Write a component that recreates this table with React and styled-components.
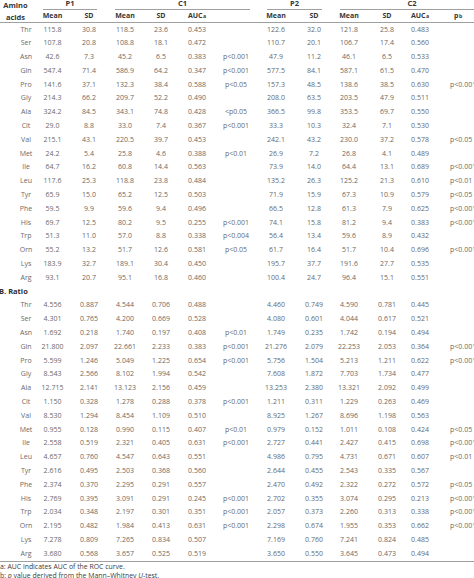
import React from 'react';
import styled, { createGlobalStyle } from 'styled-components';

const GlobalStyle = createGlobalStyle`
  html, body {
    margin: 0;
    padding: 0;
    background: #fff;
    overflow: hidden;
  }
  body {
    font-family: "Open Sans", "Liberation Sans", sans-serif;
  }
`;

// column widths: name | P1 mean sd | C1 mean sd auc p | P2 mean sd | C2 mean sd auc p
const COLS = '33px 39px 34px 38px 34px 38px 40px 40px 36px 34px 42px 24px 52px';

const conc = [
	['Thr', '115.8', '30.8', '118.5', '23.6', '0.453', '', '122.6', '32.0', '121.8', '25.8', '0.483', ''],
	['Ser', '107.8', '20.8', '108.8', '18.1', '0.472', '', '110.7', '20.1', '106.7', '17.4', '0.560', ''],
	['Asn', '42.6', '7.3', '45.2', '6.5', '0.383', 'p<0.001', '47.9', '11.2', '46.1', '6.5', '0.533', ''],
	['Gln', '547.4', '71.4', '586.9', '64.2', '0.347', 'p<0.001', '577.5', '84.1', '587.1', '61.5', '0.470', ''],
	['Pro', '141.6', '37.1', '132.3', '38.4', '0.588', 'p<0.05', '157.3', '48.5', '138.6', '38.5', '0.630', 'p<0.001'],
	['Gly', '214.3', '66.2', '209.7', '52.2', '0.490', '', '208.0', '63.5', '203.5', '47.9', '0.511', ''],
	['Ala', '324.2', '84.5', '343.1', '74.8', '0.428', '<p0.05', '366.5', '99.8', '353.5', '69.7', '0.550', ''],
	['Cit', '29.0', '8.8', '33.0', '7.4', '0.367', 'p<0.001', '33.3', '10.3', '32.4', '7.1', '0.530', ''],
	['Val', '215.1', '43.1', '220.5', '39.7', '0.453', '', '242.1', '43.2', '230.0', '37.2', '0.578', 'p<0.05'],
	['Met', '24.2', '5.4', '25.8', '4.6', '0.388', 'p<0.01', '26.9', '7.2', '26.8', '4.1', '0.489', ''],
	['Ile', '64.7', '16.2', '60.8', '14.4', '0.563', '', '73.9', '14.0', '64.4', '13.1', '0.689', 'p<0.001'],
	['Leu', '117.6', '25.3', '118.8', '23.8', '0.484', '', '135.2', '26.3', '125.2', '21.3', '0.610', 'p<0.01'],
	['Tyr', '65.9', '15.0', '65.2', '12.5', '0.503', '', '71.9', '15.9', '67.3', '10.9', '0.579', 'p<0.05'],
	['Phe', '59.5', '9.9', '59.6', '9.4', '0.496', '', '66.5', '12.8', '61.3', '7.9', '0.625', 'p<0.001'],
	['His', '69.7', '12.5', '80.2', '9.5', '0.255', 'p<0.001', '74.1', '15.8', '81.2', '9.4', '0.383', 'p<0.001'],
	['Trp', '51.3', '11.0', '57.0', '8.8', '0.338', 'p<0.004', '56.4', '13.4', '59.6', '8.9', '0.432', ''],
	['Orn', '55.2', '13.2', '51.7', '12.6', '0.581', 'p<0.05', '61.7', '16.4', '51.7', '10.4', '0.696', 'p<0.001'],
	['Lys', '183.9', '32.7', '189.1', '30.4', '0.450', '', '195.7', '37.7', '191.6', '27.7', '0.535', ''],
	['Arg', '93.1', '20.7', '95.1', '16.8', '0.460', '', '100.4', '24.7', '96.4', '15.1', '0.551', '']
];

const ratio = [
	['Thr', '4.556', '0.887', '4.544', '0.706', '0.488', '', '4.460', '0.749', '4.590', '0.781', '0.445', ''],
	['Ser', '4.301', '0.765', '4.200', '0.669', '0.528', '', '4.080', '0.601', '4.044', '0.617', '0.521', ''],
	['Asn', '1.692', '0.218', '1.740', '0.197', '0.408', 'p<0.01', '1.749', '0.235', '1.742', '0.194', '0.494', ''],
	['Gln', '21.800', '2.097', '22.661', '2.233', '0.383', 'p<0.001', '21.276', '2.079', '22.253', '2.053', '0.364', 'p<0.001'],
	['Pro', '5.599', '1.246', '5.049', '1.225', '0.654', 'p<0.001', '5.756', '1.504', '5.213', '1.211', '0.622', 'p<0.001'],
	['Gly', '8.543', '2.566', '8.102', '1.994', '0.542', '', '7.608', '1.872', '7.703', '1.734', '0.477', ''],
	['Ala', '12.715', '2.141', '13.123', '2.156', '0.459', '', '13.253', '2.380', '13.321', '2.092', '0.499', ''],
	['Cit', '1.150', '0.328', '1.278', '0.288', '0.378', 'p<0.001', '1.211', '0.311', '1.229', '0.263', '0.469', ''],
	['Val', '8.530', '1.294', '8.454', '1.109', '0.510', '', '8.925', '1.267', '8.696', '1.198', '0.563', ''],
	['Met', '0.955', '0.128', '0.990', '0.115', '0.407', 'p<0.01', '0.979', '0.152', '1.011', '0.108', '0.424', 'p<0.05'],
	['Ile', '2.558', '0.519', '2.321', '0.405', '0.631', 'p<0.001', '2.727', '0.441', '2.427', '0.415', '0.698', 'p<0.001'],
	['Leu', '4.657', '0.760', '4.547', '0.643', '0.551', '', '4.986', '0.795', '4.731', '0.671', '0.607', 'p<0.01'],
	['Tyr', '2.616', '0.495', '2.503', '0.368', '0.560', '', '2.644', '0.455', '2.543', '0.335', '0.567', ''],
	['Phe', '2.374', '0.370', '2.295', '0.291', '0.557', '', '2.470', '0.492', '2.322', '0.272', '0.572', 'p<0.05'],
	['His', '2.769', '0.395', '3.091', '0.291', '0.245', 'p<0.001', '2.702', '0.355', '3.074', '0.295', '0.213', 'p<0.001'],
	['Trp', '2.034', '0.348', '2.197', '0.301', '0.351', 'p<0.001', '2.057', '0.373', '2.260', '0.313', '0.338', 'p<0.001'],
	['Orn', '2.195', '0.482', '1.984', '0.413', '0.631', 'p<0.001', '2.298', '0.674', '1.955', '0.353', '0.662', 'p<0.001'],
	['Lys', '7.278', '0.809', '7.265', '0.834', '0.507', '', '7.169', '0.760', '7.241', '0.824', '0.485', ''],
	['Arg', '3.680', '0.568', '3.657', '0.525', '0.519', '', '3.650', '0.550', '3.645', '0.473', '0.494', '']
];

const Table = styled.div`
	width: 484px;
	margin-top: -3px;
	font-size: 7px;
	color: #6a6a6a;
`;

const Head = styled.div`
	display: grid;
	grid-template-columns: ${COLS};
	grid-template-rows: 13px 11.5px;
	border-bottom: 1px solid #a0a0a0;
	color: #363636;
	font-weight: 700;
`;

const CornerHead = styled.div`
	grid-row: 1 / span 2;
	grid-column: 1;
	display: flex;
	flex-direction: column;
	justify-content: flex-start;
	align-items: center;
	padding-top: 2px;
	padding-right: 2px;
	line-height: 12px;
	font-size: 7.5px;
`;

const GroupHead = styled.div`
	grid-row: 1;
	grid-column: ${(p) => p.$col};
	margin: 0 ${(p) => p.$r}px 0 ${(p) => p.$l}px;
	border-bottom: 1px solid #a0a0a0;
	display: flex;
	align-items: center;
	justify-content: center;
	font-size: 7.5px;
`;

const SubHead = styled.div`
	grid-row: 2;
	grid-column: ${(p) => p.$col};
	display: flex;
	align-items: center;
	justify-content: ${(p) => (p.$left ? 'flex-start' : 'center')};
	padding-left: ${(p) => p.$pad || 0}px;
`;

const Sup = styled.sup`
	font-size: 5.2px;
	vertical-align: 3px;
	line-height: 0;
	margin-left: 0.5px;
`;

const Row = styled.div`
	display: grid;
	grid-template-columns: ${COLS};
	height: 13.8px;
	align-items: center;
	line-height: 13.8px;
	white-space: nowrap;
`;

const NameCell = styled.div`
	text-align: center;
	padding-left: 19px;
`;

const Cell = styled.div`
	text-align: center;
`;

const PCell = styled.div`
	text-align: ${(p) => (p.$left ? 'left' : 'center')};
	padding-left: ${(p) => (p.$left ? 18 : 0)}px;
`;

const SectionRow = styled.div`
	height: 13.8px;
	line-height: 13.8px;
	font-weight: 700;
	font-size: 7.5px;
	color: #2e2e2e;
	margin-left: -1px;
`;

const Foot = styled.div`
	border-top: 1px solid #a0a0a0;
	width: 484px;
	color: #3a3a3a;
	font-size: 6.9px;
	line-height: 9.6px;
`;

const Note = styled.div`
	white-space: nowrap;
`;

function DataRow({ r }) {
	return (
		<Row>
			<NameCell>{r[0]}</NameCell>
			{r.slice(1, 6).map((v, i) => (
				<Cell key={i}>{v}</Cell>
			))}
			<PCell>{r[6]}</PCell>
			{r.slice(7, 12).map((v, i) => (
				<Cell key={i}>{v}</Cell>
			))}
			<PCell $left>{r[12]}</PCell>
		</Row>
	);
}

export default function App() {
	return (
		<>
			<GlobalStyle />
			<Table>
				<Head>
					<CornerHead>
						<span>Amino</span>
						<span>acids</span>
					</CornerHead>
					<GroupHead $col="2 / span 2" $l={10} $r={9}>P1</GroupHead>
					<GroupHead $col="4 / span 4" $l={9} $r={6}>C1</GroupHead>
					<GroupHead $col="8 / span 2" $l={11} $r={10}>P2</GroupHead>
					<GroupHead $col="10 / span 4" $l={8} $r={0}>C2</GroupHead>
					<SubHead $col={2}>Mean</SubHead>
					<SubHead $col={3}>SD</SubHead>
					<SubHead $col={4}>Mean</SubHead>
					<SubHead $col={5}>SD</SubHead>
					<SubHead $col={6}>AUC<Sup>a</Sup></SubHead>
					<SubHead $col={8}>Mean</SubHead>
					<SubHead $col={9}>SD</SubHead>
					<SubHead $col={10}>Mean</SubHead>
					<SubHead $col={11}>SD</SubHead>
					<SubHead $col={12}>AUC<Sup>a</Sup></SubHead>
					<SubHead $col={13} $left $pad={22}>p<Sup>b</Sup></SubHead>
				</Head>
				{conc.map((r) => (
					<DataRow key={'c' + r[0]} r={r} />
				))}
				<SectionRow>B. Ratio</SectionRow>
				{ratio.map((r) => (
					<DataRow key={'r' + r[0]} r={r} />
				))}
				<Foot>
					<Note>a: AUC indicates AUC of the ROC curve.</Note>
					<Note>
						b: <i>p</i> value derived from the Mann–Whitney <i>U</i>-test.
					</Note>
				</Foot>
			</Table>
		</>
	);
}
